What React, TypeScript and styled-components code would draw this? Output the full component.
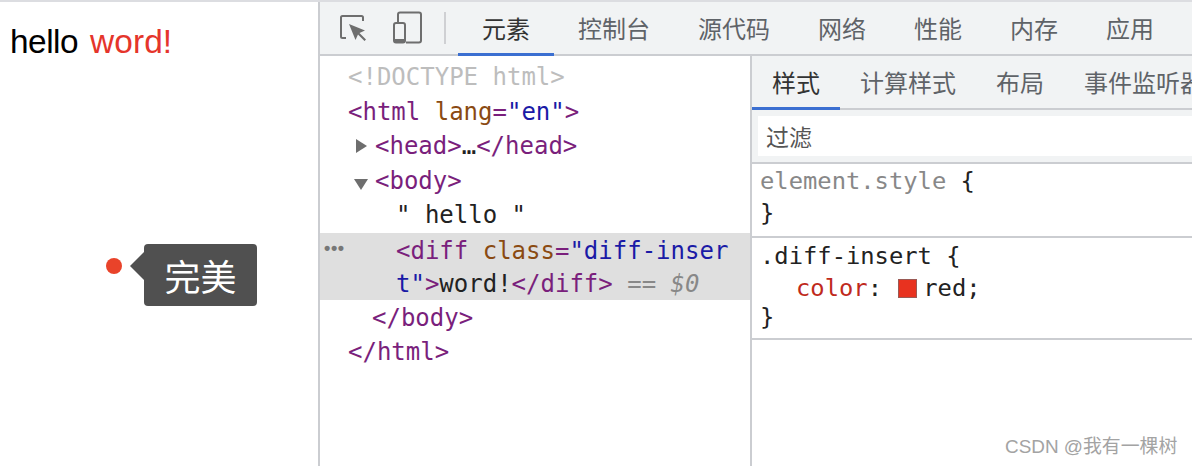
import React from "react";
import styled, { createGlobalStyle } from "styled-components";

const Global = createGlobalStyle`
  html, body { margin: 0; padding: 0; background: #fff; }
  #root { width: 1192px; height: 466px; overflow: hidden; }
`;

const CJK = `"Noto Sans CJK SC", "Liberation Sans", sans-serif`;
const MONO = `"DejaVu Sans Mono", "Noto Sans CJK SC", monospace`;
const LINE = "#cbcdd1";

const Page = styled.div`
  position: relative;
  display: grid;
  grid-template-columns: 320px 1fr;
  width: 1192px;
  height: 466px;
  box-sizing: border-box;
  border-top: 2px solid #dcdde1;
  overflow: hidden;
`;
const Preview = styled.section`
  border-right: 2px solid ${LINE};
  padding: 20px 0 0 10px;
  font-family: "Liberation Sans", Arial, sans-serif;
  font-size: 33.4px;
  line-height: 40px;
  color: #000;
`;
const Greeting = styled.div`
  display: flex;
  gap: 12px;
  letter-spacing: 0.1px;
`;
const Hello = styled.span`
  letter-spacing: -0.5px;
`;
const Red = styled.span`
  color: #e5352b;
`;
const Marker = styled.div`
  display: flex;
  align-items: flex-start;
  margin: 182px 0 0 96px;
`;
const Dot = styled.span`
  width: 16px;
  height: 16px;
  margin-top: 14px;
  border-radius: 50%;
  background: #e9432a;
`;
const Tip = styled.div`
  position: relative;
  margin-left: 22px;
  width: 113px;
  height: 62px;
  border-radius: 4px;
  background: #505050;
  color: #fff;
  font-family: ${CJK};
  font-size: 36px;
  line-height: 62px;
  text-align: center;
  &::before {
    content: "";
    position: absolute;
    left: -14px;
    top: 8px;
    border-style: solid;
    border-width: 14px 14px 14px 0;
    border-color: transparent #505050 transparent transparent;
  }
`;
const Tools = styled.section`
  display: grid;
  grid-template-rows: 54px 1fr;
  min-width: 0;
`;
const TopBar = styled.div`
  display: flex;
  align-items: stretch;
  background: #f1f3f4;
  border-bottom: 2px solid ${LINE};
  box-sizing: border-box;
`;
const IconSlot = styled.div`
  display: flex;
  align-items: center;
  padding-left: 19px;
  width: 138px;
  box-sizing: border-box;
  flex: none;
`;
const Separator = styled.span`
  width: 2px;
  height: 32px;
  margin-left: 21px;
  background: #cfd0d3;
`;
const Tab = styled.div<{ $active?: boolean; $pad: number }>`
  flex: none;
  position: relative;
  padding: 0 ${(p) => p.$pad}px;
  font-family: ${CJK};
  font-size: 24px;
  line-height: 52px;
  color: ${(p) => (p.$active ? "#333" : "#5f6368")};
  white-space: nowrap;
  ${(p) =>
    p.$active
      ? `&::after { content: ""; position: absolute; left: 0; right: 0; bottom: -2px; height: 3px; background: #3b6fd1; }`
      : ""}
`;
const Split = styled.div`
  display: grid;
  grid-template-columns: 432px 1fr;
  min-height: 0;
`;
const Dom = styled.div`
  border-right: 2px solid ${LINE};
  padding-top: 4px;
  font-family: ${MONO};
  font-size: 24px;
  white-space: pre;
`;
const Row = styled.div<{ $indent: number }>`
  position: relative;
  height: 34.6px;
  line-height: 35px;
  padding-left: ${(p) => p.$indent}px;
  color: #222;
`;
const Selected = styled.div`
  position: relative;
  background: #dfdfdf;
  height: 67px;
  & > div { height: 33.5px; line-height: 36px; }
  & + div { line-height: 37px; }
`;
const More = styled.span`
  position: absolute;
  left: 4px;
  top: 3px;
  font-family: "Liberation Sans", sans-serif;
  font-size: 18px;
  font-weight: 700;
  letter-spacing: 0.6px;
  line-height: 24px;
  color: #777;
`;
const Arrow = styled.span<{ $open?: boolean }>`
  position: absolute;
  left: ${(p) => (p.$open ? 34 : 36)}px;
  top: ${(p) => (p.$open ? 15 : 10)}px;
  width: 0;
  height: 0;
  border-style: solid;
  border-color: transparent;
  ${(p) =>
    p.$open
      ? `border-width: 11px 7px 0 7px; border-top-color: #6e6e6e;`
      : `border-width: 7px 0 7px 11px; border-left-color: #6e6e6e;`}
`;
const Tag = styled.span`color: #7a1f7c;`;
const Attr = styled.span`color: #8a4a12;`;
const Val = styled.span`color: #1a1aa6;`;
const Muted = styled.span`color: #bdbdbd;`;
const Hint = styled.span`color: #888;`;
const HintItalic = styled.i`
  color: #888;
  font-style: italic;
`;
const Styles = styled.div`
  display: flex;
  flex-direction: column;
  min-width: 0;
  overflow: hidden;
`;
const SubBar = styled(TopBar)`
  flex: none;
  height: 54px;
`;
const FilterRow = styled.div`
  flex: none;
  height: 54px;
  box-sizing: border-box;
  padding: 6px 0 6px 6px;
  background: #f1f3f4;
  border-bottom: 2px solid ${LINE};
`;
const FilterBox = styled.div`
  height: 40px;
  background: #fff;
  padding-left: 8px;
  font-family: ${CJK};
  font-size: 23px;
  line-height: 40px;
  color: #555;
`;
const Rule = styled.div<{ $h: number; $top: number }>`
  flex: none;
  box-sizing: border-box;
  height: ${(p) => p.$h}px;
  padding: ${(p) => p.$top}px 0 0 8px;
  border-bottom: 2px solid ${LINE};
  font-family: ${MONO};
  font-size: 23.8px;
  color: #222;
  white-space: pre;
`;
const RuleLine = styled.div<{ $h?: number }>`
  height: ${(p) => p.$h ?? 31.5}px;
  line-height: 31.5px;
`;
const Prop = styled.span`
  color: #c02a1c;
  margin-left: 36px;
`;
const Swatch = styled.span`
  display: inline-block;
  box-sizing: border-box;
  width: 19px;
  height: 19px;
  margin: 0 6px 0 2px;
  vertical-align: -2px;
  background: #e8321f;
  border: 1.5px solid #9a5a55;
`;
const Mark = styled.span`
  position: absolute;
  left: 1005px;
  top: 434px;
  font-family: "Liberation Sans", "Noto Sans CJK SC", sans-serif;
  font-size: 18.9px;
  line-height: 22px;
  color: #a3a3a3;
  white-space: nowrap;
`;

const InspectIcon = () => (
  <svg width="28" height="28" viewBox="0 0 28 28" fill="none">
    <path d="M7 24H3.5A1.5 1.5 0 0 1 2 22.5V3.5A1.5 1.5 0 0 1 3.5 2H22.5A1.5 1.5 0 0 1 24 3.5V7" stroke="#6e6e6e" strokeWidth="2" />
    <path d="M10 10L26 16.5L20.5 19L27 25.5L25.5 27L19 20.5L16.5 26Z" fill="#6e6e6e" />
  </svg>
);
const DeviceIcon = () => (
  <svg width="31" height="34" viewBox="0 0 31 34" fill="none" style={{ marginLeft: 25 }}>
    <path d="M6 11V3.5A2 2 0 0 1 8 1.5H27A2 2 0 0 1 29 3.5V29.5A2 2 0 0 1 27 31.5H14" stroke="#6e6e6e" strokeWidth="2" />
    <rect x="2" y="12" width="11" height="19.5" rx="2" stroke="#6e6e6e" strokeWidth="2" />
    <rect x="2" y="28" width="11" height="3.5" fill="#6e6e6e" />
  </svg>
);

const mainTabs = ["控制台", "源代码", "网络", "性能", "内存", "应用"];

export default function App() {
  return (
    <>
      <Global />
      <Page>
        <Preview>
          <Greeting>
            <Hello>hello</Hello>
            <Red>word!</Red>
          </Greeting>
          <Marker>
            <Dot />
            <Tip>完美</Tip>
          </Marker>
        </Preview>
        <Tools>
          <TopBar>
            <IconSlot>
              <InspectIcon />
              <DeviceIcon />
              <Separator />
            </IconSlot>
            <Tab $active $pad={24}>元素</Tab>
            {mainTabs.map((t) => (
              <Tab key={t} $pad={24}>{t}</Tab>
            ))}
          </TopBar>
          <Split>
            <Dom>
              <Row $indent={28}><Muted>{"<!DOCTYPE html>"}</Muted></Row>
              <Row $indent={28}>
                <Tag>{"<html "}</Tag><Attr>lang</Attr><Tag>=</Tag><Val>"en"</Val><Tag>{">"}</Tag>
              </Row>
              <Row $indent={55}>
                <Arrow />
                <Tag>{"<head>"}</Tag>…<Tag>{"</head>"}</Tag>
              </Row>
              <Row $indent={55}>
                <Arrow $open />
                <Tag>{"<body>"}</Tag>
              </Row>
              <Row $indent={76}>" hello "</Row>
              <Selected>
                <More>•••</More>
                <Row $indent={76}>
                  <Tag>{"<diff "}</Tag><Attr>class</Attr><Tag>=</Tag><Val>"diff-inser</Val>
                </Row>
                <Row $indent={76}>
                  <Val>t"</Val><Tag>{">"}</Tag>word!<Tag>{"</diff>"}</Tag> <Hint>==</Hint> <HintItalic>$0</HintItalic>
                </Row>
              </Selected>
              <Row $indent={52}><Tag>{"</body>"}</Tag></Row>
              <Row $indent={28}><Tag>{"</html>"}</Tag></Row>
            </Dom>
            <Styles>
              <SubBar>
                <Tab $active $pad={20}>样式</Tab>
                <Tab $pad={20}>计算样式</Tab>
                <Tab $pad={20}>布局</Tab>
                <Tab $pad={20}>事件监听器</Tab>
              </SubBar>
              <FilterRow>
                <FilterBox>过滤</FilterBox>
              </FilterRow>
              <Rule $h={74} $top={2}>
                <RuleLine><Hint>element.style</Hint>{" {"}</RuleLine>
                <RuleLine>{"}"}</RuleLine>
              </Rule>
              <Rule $h={102} $top={3}>
                <RuleLine $h={32}>{".diff-insert {"}</RuleLine>
                <RuleLine $h={29}>
                  <Prop>color</Prop>{": "}<Swatch />red;
                </RuleLine>
                <RuleLine>{"}"}</RuleLine>
              </Rule>
            </Styles>
          </Split>
        </Tools>
        <Mark>CSDN @我有一棵树</Mark>
      </Page>
    </>
  );
}
